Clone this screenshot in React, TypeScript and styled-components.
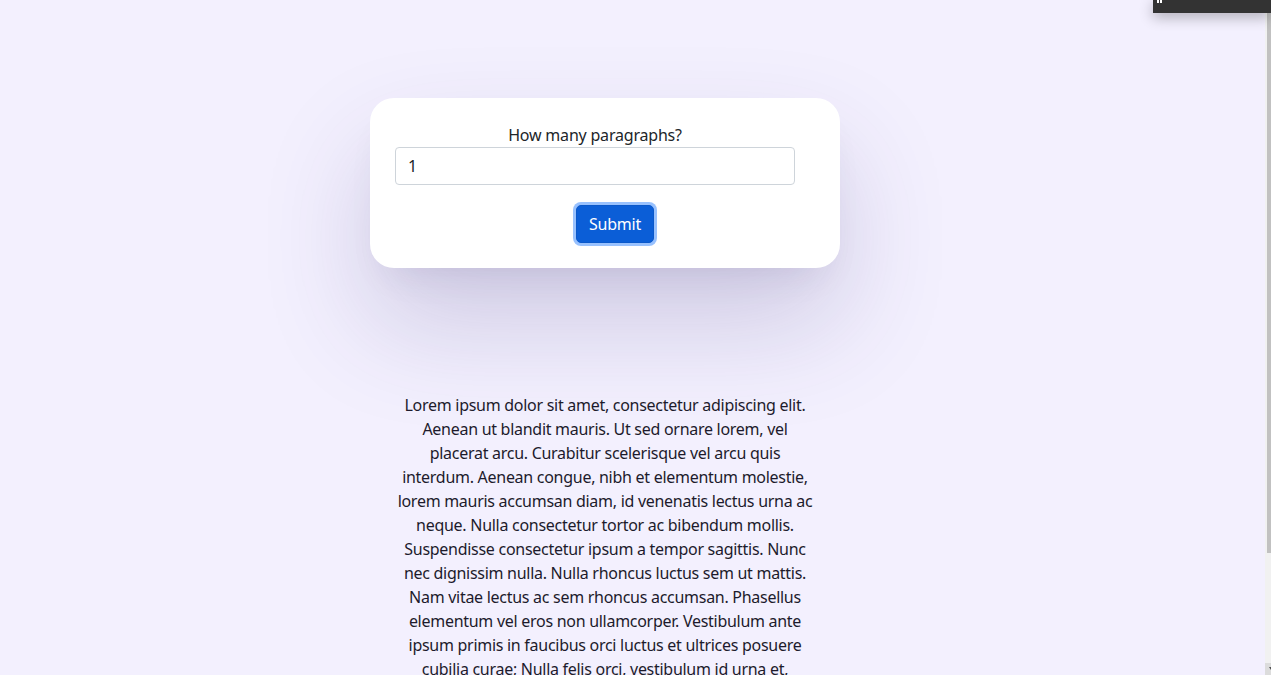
import styled, { createGlobalStyle } from 'styled-components'

const GlobalStyle = createGlobalStyle`
    html {
        background: #f3f0fe;
    }

    body {
        margin: 0;
        background: #f3f0fe;
        color: #1d1b2c;
        font-family: 'Noto Sans', 'Open Sans', sans-serif;
        font-size: 16px;
        line-height: 24px;
    }
`

const Page = styled.main`
    width: 1210px;
    display: flex;
    flex-direction: column;
    align-items: center;
    padding: 98px 0 150px;
`

const Card = styled.section`
    width: 470px;
    box-sizing: border-box;
    padding: 25px;
    background: #ffffff;
    border-radius: 24px;
    box-shadow: 0 55px 110px rgba(62, 52, 120, 0.2), 0 20px 40px -20px rgba(40, 30, 80, 0.12);
`

const Form = styled.form`
    display: flex;
    flex-direction: column;
`

const Field = styled.div`
    width: 400px;
    display: flex;
    flex-direction: column;
    align-items: center;
`

const Label = styled.label`
    color: #212529;
    letter-spacing: -0.2px;
`

const NumberInput = styled.input`
    width: 100%;
    box-sizing: border-box;
    height: 38px;
    padding: 6px 12px;
    font: inherit;
    color: #212529;
    background: #fff;
    border: 1px solid #ced4da;
    border-radius: 4px;
    outline: none;
`

const ButtonRow = styled.div`
    display: flex;
    justify-content: center;
    margin-top: 20px;
    padding-left: 20px;
`

const SubmitButton = styled.button`
    height: 38px;
    padding: 6px 12px;
    font: inherit;
    letter-spacing: -0.2px;
    color: #fff;
    background: #0b5ed7;
    border: 1px solid #0a58ca;
    border-radius: 5px;
    box-shadow: 0 0 0 3px #98c1fe;
    cursor: pointer;
`

const Paragraph = styled.p`
    margin: 125px 0 0;
    text-align: center;
    white-space: pre-line;
    letter-spacing: -0.28px;
`

const Toolbar = styled.div`
    position: fixed;
    top: 0;
    right: 0;
    width: 118px;
    height: 13px;
    background: #333333;
    box-shadow: 0 4px 14px rgba(0, 0, 0, 0.3);
    display: flex;
    gap: 1px;
    padding-left: 4px;
    box-sizing: border-box;
    z-index: 2;
`

const Pip = styled.span`
    width: 2px;
    height: 3px;
    background: #fff;
`

const ScrollTrack = styled.div`
    position: fixed;
    top: 0;
    right: 0;
    bottom: 0;
    width: 6px;
    background: #f1f1f1;
    display: flex;
    flex-direction: column;
    align-items: flex-end;
    z-index: 1;
`

const ScrollThumb = styled.div`
    width: 4px;
    height: 553px;
    background: #c1c1c1;
`

const ScrollButton = styled.div`
    margin-top: auto;
    width: 6px;
    height: 12px;
    background: #dcdcdc;
    position: relative;

    &::after {
        content: '';
        position: absolute;
        right: 0;
        top: 4px;
        border-top: 3px solid #505050;
        border-left: 2px solid transparent;
    }
`

const lines = [
    'Lorem ipsum dolor sit amet, consectetur adipiscing elit.',
    'Aenean ut blandit mauris. Ut sed ornare lorem, vel',
    'placerat arcu. Curabitur scelerisque vel arcu quis',
    'interdum. Aenean congue, nibh et elementum molestie,',
    'lorem mauris accumsan diam, id venenatis lectus urna ac',
    'neque. Nulla consectetur tortor ac bibendum mollis.',
    'Suspendisse consectetur ipsum a tempor sagittis. Nunc',
    'nec dignissim nulla. Nulla rhoncus luctus sem ut mattis.',
    'Nam vitae lectus ac sem rhoncus accumsan. Phasellus',
    'elementum vel eros non ullamcorper. Vestibulum ante',
    'ipsum primis in faucibus orci luctus et ultrices posuere',
    'cubilia curae; Nulla felis orci, vestibulum id urna et,',
    'faucibus aliquet nisi. Donec sed nisl sit amet leo',
    'tempus pulvinar. Integer eu risus in nunc fringilla',
    'sodales. Morbi vel ipsum ac elit tincidunt luctus.',
]

export default function App() {
    return (
        <>
            <GlobalStyle />
            <Toolbar>
                <Pip />
                <Pip />
            </Toolbar>
            <ScrollTrack>
                <ScrollThumb />
                <ScrollButton />
            </ScrollTrack>
            <Page>
                <Card>
                    <Form onSubmit={(e) => e.preventDefault()}>
                        <Field>
                            <Label htmlFor='amount'>How many paragraphs?</Label>
                            <NumberInput id='amount' type='number' defaultValue={1} />
                        </Field>
                        <ButtonRow>
                            <SubmitButton type='submit'>Submit</SubmitButton>
                        </ButtonRow>
                    </Form>
                </Card>
                <Paragraph>{lines.join('\n')}</Paragraph>
            </Page>
        </>
    )
}
